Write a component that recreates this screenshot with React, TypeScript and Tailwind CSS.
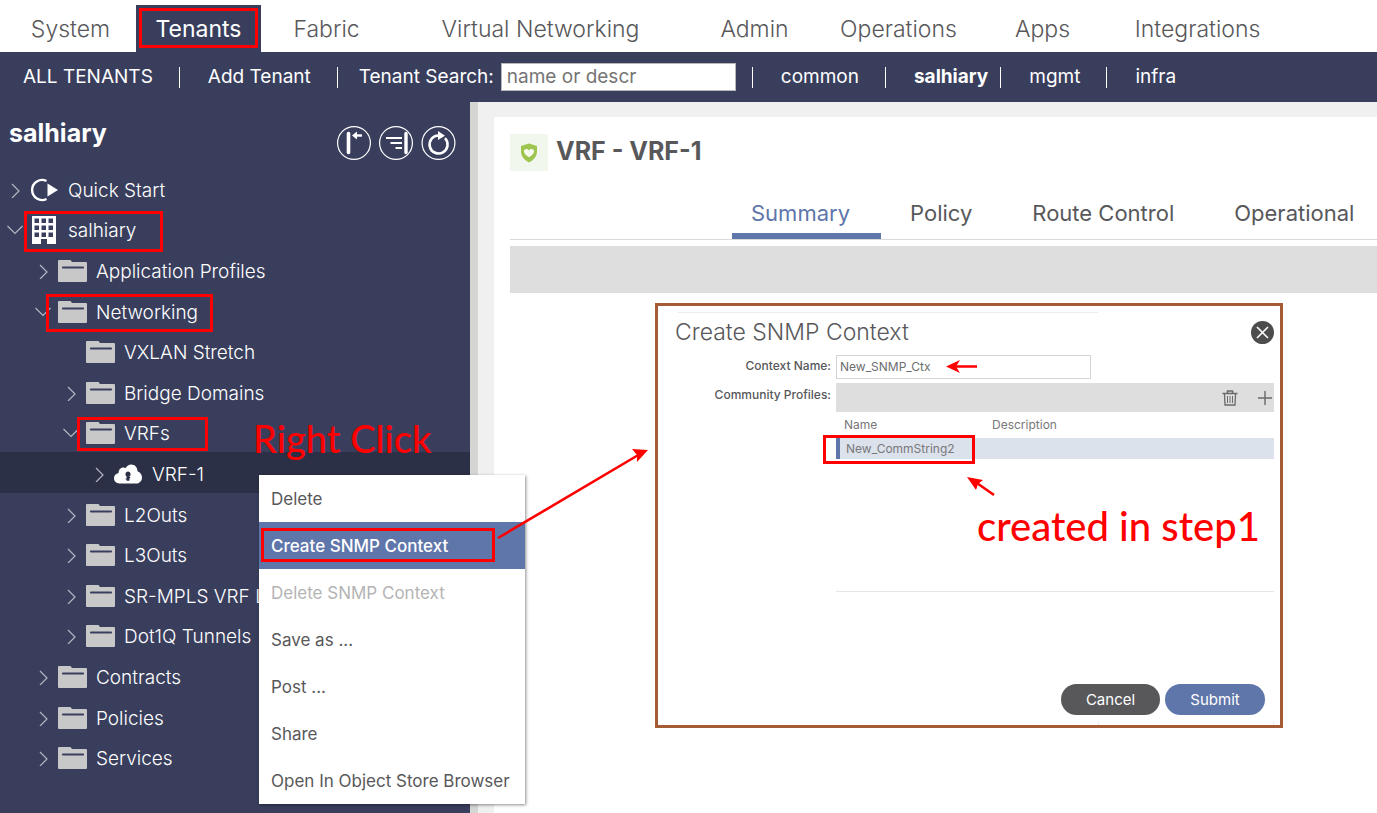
import React, { useState } from 'react';
import clsx from 'clsx';

const mainTabs = [
  { label: 'System', width: 'w-[125px]' },
  { label: 'Tenants', width: 'w-[125px]' },
  { label: 'Fabric', width: 'w-[125px]' },
  { label: 'Virtual Networking', width: 'w-[297px]' },
  { label: 'Admin', width: 'w-[125px]' },
  { label: 'Operations', width: 'w-[157px]' },
  { label: 'Apps', width: 'w-[125px]' },
  { label: 'Integrations', width: 'w-[179px]' },
];

const pageTabs = ['Summary', 'Policy', 'Route Control', 'Operational'];

type NodeIcon = 'start' | 'tenant' | 'folder' | 'vrf';

interface TreeNode {
  label: string;
  icon: NodeIcon;
  depth: number;
  state: 'open' | 'closed' | 'leaf';
}

const tree: TreeNode[] = [
  { label: 'Quick Start', icon: 'start', depth: 0, state: 'closed' },
  { label: 'salhiary', icon: 'tenant', depth: 0, state: 'open' },
  { label: 'Application Profiles', icon: 'folder', depth: 1, state: 'closed' },
  { label: 'Networking', icon: 'folder', depth: 1, state: 'open' },
  { label: 'VXLAN Stretch', icon: 'folder', depth: 2, state: 'leaf' },
  { label: 'Bridge Domains', icon: 'folder', depth: 2, state: 'closed' },
  { label: 'VRFs', icon: 'folder', depth: 2, state: 'open' },
  { label: 'VRF-1', icon: 'vrf', depth: 3, state: 'closed' },
  { label: 'L2Outs', icon: 'folder', depth: 2, state: 'closed' },
  { label: 'L3Outs', icon: 'folder', depth: 2, state: 'closed' },
  { label: 'SR-MPLS VRF L', icon: 'folder', depth: 2, state: 'closed' },
  { label: 'Dot1Q Tunnels', icon: 'folder', depth: 2, state: 'closed' },
  { label: 'Contracts', icon: 'folder', depth: 1, state: 'closed' },
  { label: 'Policies', icon: 'folder', depth: 1, state: 'closed' },
  { label: 'Services', icon: 'folder', depth: 1, state: 'closed' },
];

const indents = ['pl-[7px]', 'pl-[35px]', 'pl-[63px]', 'pl-[91px]'];

const menuItems = [
  { label: 'Delete' },
  { label: 'Create SNMP Context', active: true },
  { label: 'Delete SNMP Context', disabled: true },
  { label: 'Save as ...' },
  { label: 'Post ...' },
  { label: 'Share' },
  { label: 'Open In Object Store Browser' },
];

const Chevron = ({ state }: { state: TreeNode['state'] }) => (
  <svg width="16" height="16" viewBox="0 0 16 16" fill="none" stroke="#b4b6c2" strokeWidth="1.2" className="shrink-0">
    {state === 'closed' && <path d="M5 2 L12 9 L5 16" />}
    {state === 'open' && <path d="M0.5 4 L8 11.5 L15.5 4" />}
  </svg>
);

const TreeIcon = ({ icon }: { icon: NodeIcon }) => {
  if (icon === 'start') {
    return (
      <svg width="28" height="24" viewBox="0 0 28 24" className="shrink-0">
        <path d="M16.5 3 A10 10 0 1 0 16.5 21" fill="none" stroke="#fff" strokeWidth="2.4" />
        <path d="M17.5 5.5 L28 12 L17.5 18.5 Z" fill="#fff" />
      </svg>
    );
  }
  if (icon === 'tenant') {
    return (
      <svg width="28" height="28" viewBox="0 0 28 28" className="shrink-0">
        <path
          fillRule="evenodd"
          fill="#fff"
          d="M2 0H26V28H17V23H11V28H2Z M4.5 2.5V7H9V2.5Z M11.5 2.5V7H16V2.5Z M18.5 2.5V7H23V2.5Z M4.5 9.5V14H9V9.5Z M11.5 9.5V14H16V9.5Z M18.5 9.5V14H23V9.5Z M4.5 16.5V21H9V16.5Z M11.5 16.5V21H16V16.5Z M18.5 16.5V21H23V16.5Z"
        />
      </svg>
    );
  }
  if (icon === 'vrf') {
    return (
      <svg width="28" height="22" viewBox="0 0 28 22" className="shrink-0">
        <path
          fill="#fff"
          d="M5.5 20.5C2.3 20.5 0 18.2 0 15.3C0 12.5 1.9 10.5 4.6 10C4.4 6.8 6.6 4.4 9.4 4.4C10.3 4.4 11.1 4.6 11.8 5C12.9 2.8 14.8 1.5 17.2 1.5C20.9 1.5 23.5 4.4 23.5 8.2C26.3 9.2 28 11.6 28 14.4C28 17.8 25.4 20.5 22 20.5Z"
        />
        <path fill="#2c3046" d="M14 8.6A2.6 2.6 0 0 1 15.4 13.4V14H16.2V15.2H15.4V17.8H12.6V16.6H11.6V15.4H12.6V13.4A2.6 2.6 0 0 1 14 8.6Z" />
      </svg>
    );
  }
  return (
    <svg width="29" height="24" viewBox="0 0 29 24" className="shrink-0">
      <path fill="#c8c8c9" d="M1 1H12.5L14 3H28Q29 3 29 4V22Q29 23 28 23H1Q0 23 0 22V2Q0 1 1 1Z" />
      <path d="M5 8.5H25" stroke="#393e5d" strokeWidth="2.2" strokeLinecap="round" />
    </svg>
  );
};

const Separator = () => <span className="h-[21px] w-px shrink-0 bg-white" />;

const TopBar = () => (
  <nav className="flex h-[52px] shrink-0 gap-[3px] overflow-hidden bg-white pt-[5px] pl-[8px]">
    {mainTabs.map((tab) => (
      <a
        key={tab.label}
        href="#"
        className={clsx(
          'flex shrink-0 items-center justify-center pt-[2px] text-[23px] whitespace-nowrap',
          tab.width,
          tab.label === 'Tenants' ? 'bg-[#393e5d] text-white' : 'font-light text-[#58585b]'
        )}
      >
        {tab.label}
      </a>
    ))}
  </nav>
);

const TenantBar = () => {
  const [search, setSearch] = useState('');

  return (
    <div className="flex h-[50px] shrink-0 items-center overflow-hidden bg-[#393e5d] pl-[23px] text-[19px] whitespace-nowrap text-white">
      <a href="#" className="mr-[26px]">ALL TENANTS</a>
      <Separator />
      <a href="#" className="mr-[26px] ml-[28px]">Add Tenant</a>
      <Separator />
      <label htmlFor="tenant-search" className="ml-[21px]">Tenant Search:</label>
      <input
        id="tenant-search"
        value={search}
        onChange={(e) => setSearch(e.target.value)}
        placeholder="name or descr"
        className="mr-[16px] ml-[7px] h-[28px] w-[235px] border border-[#b8b8b8] bg-white px-[5px] text-[#58585b] placeholder:text-[#757575]"
      />
      <Separator />
      <a href="#" className="mr-[26px] ml-[28px]">common</a>
      <Separator />
      <a href="#" className="mr-[12px] ml-[28px] font-bold">salhiary</a>
      <Separator />
      <a href="#" className="mr-[26px] ml-[28px]">mgmt</a>
      <Separator />
      <a href="#" className="ml-[28px]">infra</a>
    </div>
  );
};

const Sidebar = () => (
  <aside className="w-[470px] shrink-0 bg-[#393e5d] text-white">
    <div className="flex h-[66px] items-start justify-between pt-[12px] pr-[14px] pl-[9px]">
      <h2 className="text-[25px] leading-[38px] font-bold">salhiary</h2>
      <div className="flex gap-[8px] pt-[12px]">
        <button aria-label="Hide navigation">
          <svg width="34" height="34" viewBox="0 0 34 34" fill="none" stroke="#fff">
            <circle cx="17" cy="17" r="16.4" strokeWidth="1.2" />
            <path d="M11.5 7.5V26.5" strokeWidth="3.6" strokeLinecap="round" />
            <path d="M17 9.5H25" strokeWidth="2.4" />
            <path d="M15 9.5L20 5.5V13.5Z" fill="#fff" stroke="none" />
          </svg>
        </button>
        <button aria-label="Collapse tree">
          <svg width="34" height="34" viewBox="0 0 34 34" fill="none" stroke="#fff">
            <circle cx="17" cy="17" r="16.4" strokeWidth="1.2" />
            <path d="M7 12H23M11.5 17H23M16.5 22H23" strokeWidth="2.2" />
            <path d="M27 7.5V26.5" strokeWidth="3.4" strokeLinecap="round" />
          </svg>
        </button>
        <button aria-label="Refresh">
          <svg width="35" height="34" viewBox="0 0 35 34" fill="none" stroke="#fff">
            <circle cx="17.5" cy="17" r="16.4" strokeWidth="1.2" />
            <path d="M24 12.2A9 9 0 1 1 17.5 9.5" strokeWidth="2.6" />
            <path d="M17 5L24 9.7L17 14Z" fill="#fff" stroke="none" />
          </svg>
        </button>
      </div>
    </div>
    <ul className="flex h-[609px] flex-col">
      {tree.map((node) => (
        <li
          key={node.label + node.depth}
          className={clsx('flex flex-1 items-center pt-[3px]', indents[node.depth], node.label === 'VRF-1' && 'bg-[#2c3046]')}
        >
          <button className="flex items-center text-[19px] leading-[24px] whitespace-nowrap">
            <Chevron state={node.state} />
            <span className="ml-[7px] flex w-[38px]">
              <TreeIcon icon={node.icon} />
            </span>
            <span className="pt-[2px] font-light">{node.label}</span>
          </button>
        </li>
      ))}
    </ul>
  </aside>
);

const ContextMenu = () => (
  <div role="menu" className="absolute top-[475px] left-[259px] w-[266px] bg-white shadow-[1px_1px_3px_rgba(0,0,0,0.45)]">
    {menuItems.map((item) => (
      <button
        key={item.label}
        role="menuitem"
        disabled={item.disabled}
        className={clsx(
          'block h-[47px] w-full pt-[2px] pl-[12px] text-left text-[17px] whitespace-nowrap',
          item.active && 'bg-[#5f76aa] font-medium text-white',
          item.disabled && 'text-[#b4b4b5]',
          !item.active && !item.disabled && 'text-[#58585b]'
        )}
      >
        {item.label}
      </button>
    ))}
  </div>
);

const SnmpDialog = () => {
  const [name, setName] = useState('New_SNMP_Ctx');

  return (
    <form
      role="dialog"
      aria-label="Create SNMP Context"
      onSubmit={(e) => e.preventDefault()}
      className="absolute top-[303px] left-[655px] w-[628px] border-[3px] border-[#a55b36] bg-white pt-[6px] pr-[6px] text-[12px] text-[#58585b]"
    >
      <div className="ml-[20px] w-[420px] border-t border-[#ececec]" />
      <div className="flex h-[40px] items-center justify-between pb-[2px] pl-[17px]">
        <h3 className="text-[23px] font-light">Create SNMP Context</h3>
        <button type="button" aria-label="Close">
          <svg width="23" height="23" viewBox="0 0 23 23">
            <circle cx="11.5" cy="11.5" r="11.5" fill="#4d4d4e" />
            <path d="M6 6L17 17M17 6L6 17" stroke="#fff" strokeWidth="1.6" />
          </svg>
        </button>
      </div>

      <div className="flex pt-[2px]">
        <label htmlFor="context-name" className="w-[173px] pt-[2px] text-right font-medium">Context Name:</label>
        <input
          id="context-name"
          value={name}
          onChange={(e) => setName(e.target.value)}
          className="ml-[5px] h-[24px] w-[255px] border border-[#d4d4d4] px-[3px] pb-[2px] text-[#6d6d70]"
        />
      </div>

      <div className="flex pt-[4px]">
        <span className="w-[173px] pt-[3px] text-right font-medium">Community Profiles:</span>
        <div className="ml-[5px] h-[209px] flex-1 border-b border-[#e6e6e6]">
          <div className="flex h-[29px] items-center justify-end gap-[20px] bg-[#dedede] pr-[2px]">
            <button type="button" aria-label="Delete profile">
              <svg width="16" height="16" viewBox="0 0 16 16" fill="none" stroke="#6a6a6c">
                <path d="M0.5 3.5H15.5M5.5 3V1H10.5V3" strokeWidth="1.6" />
                <path d="M2.5 4L3 15H13L13.5 4" strokeWidth="1.3" />
                <path d="M5.5 6V13M8 6V13M10.5 6V13" strokeWidth="1" />
              </svg>
            </button>
            <button type="button" aria-label="Add profile">
              <svg width="14" height="14" viewBox="0 0 14 14" stroke="#6a6a6c" strokeWidth="1.4">
                <path d="M7 0V14M0 7H14" />
              </svg>
            </button>
          </div>
          <table className="w-full text-left text-[#77777a]">
            <thead>
              <tr className="h-[26px]">
                <th className="w-[154px] pl-[6px] font-normal">Name</th>
                <th className="font-normal">Description</th>
              </tr>
            </thead>
            <tbody>
              <tr className="h-[21px] bg-[#dce2ec]">
                <td className="border-l-4 border-[#5f76aa] pl-[6px]">New_CommString2</td>
                <td />
              </tr>
            </tbody>
          </table>
        </div>
      </div>

      <div className="flex justify-end gap-[5px] pt-[92px] pr-[9px] pb-[6px] text-[15px] text-white">
        <button type="button" className="h-[31px] w-[99px] rounded-full bg-[#58585b] pt-[2px]">Cancel</button>
        <button type="submit" className="h-[31px] w-[100px] rounded-full bg-[#5f76aa] pt-[2px]">Submit</button>
      </div>
      <div className="ml-auto h-[4px] w-[176px] border-x border-[#ececec]" />
    </form>
  );
};

// Red boxes, arrows and notes drawn over the page
const Annotations = () => (
  <div className="pointer-events-none absolute inset-0 overflow-hidden">
    <div className="absolute top-[8px] left-[139px] h-[40px] w-[119px] border-[3px] border-[#f00]" />
    <div className="absolute top-[211px] left-[24px] h-[41px] w-[139px] border-[3px] border-[#f00]" />
    <div className="absolute top-[294px] left-[46px] h-[38px] w-[167px] border-[3px] border-[#f00]" />
    <div className="absolute top-[417px] left-[77px] h-[34px] w-[131px] border-[3px] border-[#f00]" />
    <div className="absolute top-[528px] left-[261px] h-[34px] w-[234px] border-[3px] border-[#f00]" />
    <div className="absolute top-[435px] left-[823px] h-[29px] w-[152px] border-[3px] border-[#f00]" />
    <svg width="1377" height="813" className="absolute top-0 left-0" stroke="#f00" strokeWidth="2.6" fill="#f00">
      <path d="M498 538L640 454M977 366.5H952M994 495L974 481" />
      <path stroke="none" d="M648 450L632 449L637 455L637 462Z" />
      <path stroke="none" d="M946 366.5L960 360L956 366.5L960 373Z" />
      <path stroke="none" d="M967 477L983 480L978 484L976 490Z" />
    </svg>
    <span className="absolute top-[414px] left-[253px] font-['Lato',sans-serif] text-[38px] leading-[48px] font-medium text-[#f00]">Right Click</span>
    <span className="absolute top-[502px] left-[977px] font-['Lato',sans-serif] text-[40px] leading-[48px] font-medium text-[#f00]">created in step1</span>
  </div>
);

export default function App() {
  return (
    <div className="relative flex min-h-screen flex-col overflow-hidden bg-white font-['Inter',sans-serif]">
      <TopBar />
      <TenantBar />
      <div className="flex flex-1">
        <Sidebar />
        <div className="w-[8px] shrink-0 bg-[#d5d5d3]" />
        <div className="flex min-w-0 flex-1 flex-col bg-[#f0f0f0] pt-[15px] pl-[16px]">
          <main className="flex-1 bg-white pt-[17px] pl-[16px]">
            <header className="flex items-start gap-[8px]">
              <span className="flex h-[37px] w-[38px] items-center justify-center bg-[#f1f7ec]">
                <svg width="16" height="20" viewBox="0 0 16 20">
                  <path d="M8 0.5L16 3V8.5C16 13.5 12.5 17 8 19.5C3.5 17 0 13.5 0 8.5V3Z" fill="#9dc54f" />
                  <path d="M8 14.2C4.6 11.8 3 10.2 3 8.4C3 5.8 6.4 5.2 8 7.4C9.6 5.2 13 5.8 13 8.4C13 10.2 11.4 11.8 8 14.2Z" fill="#f6faf1" />
                </svg>
              </span>
              <h1 className="text-[25px] leading-[34px] font-bold text-[#58585b]">VRF - VRF-1</h1>
            </header>
            <div className="mt-[16px] flex gap-[10px] overflow-hidden border-b border-[#d9d9d9] pl-[222px]">
              {pageTabs.map((tab, i) => (
                <a
                  key={tab}
                  href="#"
                  className={clsx(
                    'h-[52px] shrink-0 border-b-[6px] pr-[31px] pl-[19px] text-[22px] leading-[52px] whitespace-nowrap',
                    i === 0 ? 'border-[#5f76aa] text-[#5f76aa]' : 'border-transparent text-[#58585b]'
                  )}
                >
                  {tab}
                </a>
              ))}
            </div>
            <div className="mt-[6px] h-[47px] bg-[#dedede]" />
          </main>
        </div>
      </div>
      <ContextMenu />
      <SnmpDialog />
      <Annotations />
    </div>
  );
}
